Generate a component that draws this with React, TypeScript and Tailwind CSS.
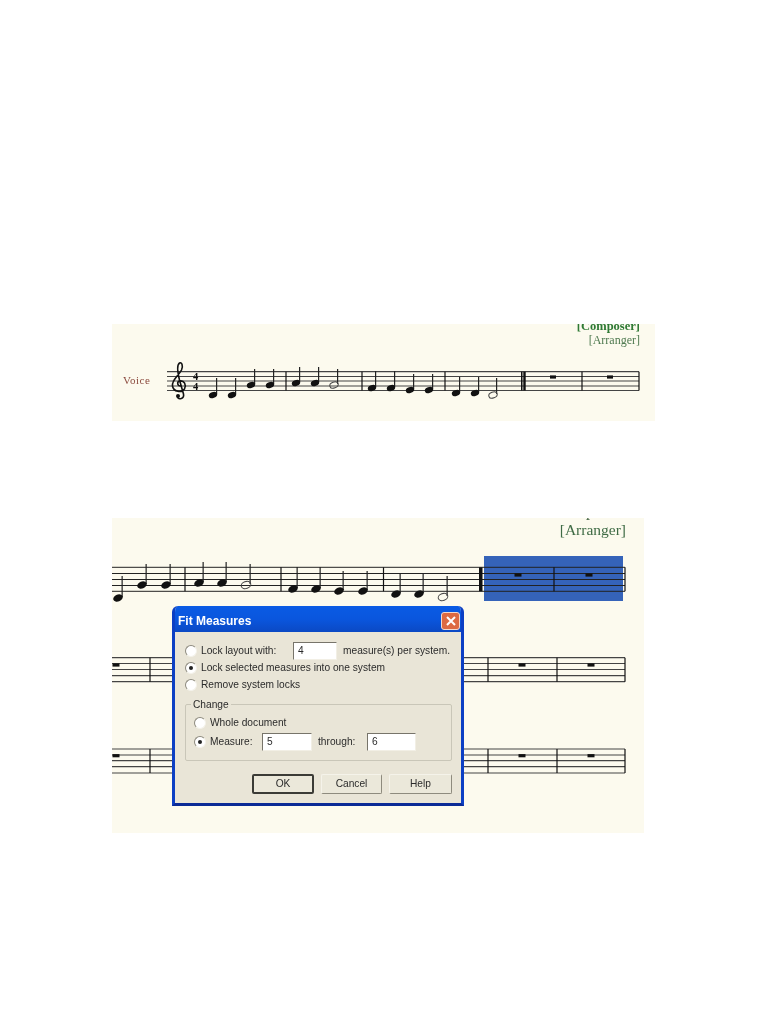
import React from "react";

type Note = [x: number, y: number, stemTop: number, hollow?: boolean];

const serif = "font-['Liberation_Serif',serif]";

const firstNotes: Note[] = [
  [213, 395, 378], [232, 395, 378], [251, 385, 369], [270, 385, 369],
  [296, 383, 367], [315, 383, 367], [334, 385, 369, true],
  [372, 388, 371], [391, 388, 371], [410, 390, 374], [429, 390, 374],
  [456, 393, 377], [475, 393, 377], [493, 395, 378, true],
];

const secondNotes: Note[] = [
  [118, 598, 576], [142, 585, 564], [166, 585, 564],
  [199, 583, 562], [222, 583, 562], [246, 585, 564, true],
  [293, 589, 567], [316, 589, 567], [339, 591, 571], [363, 591, 571],
  [396, 594, 573], [419, 594, 573], [443, 597, 576, true],
];

function Staff(props: {
  x1: number;
  x2: number;
  ys: number[];
  bars: number[];
  color: string;
  width?: number;
}) {
  const { x1, x2, ys, bars, color, width = 1 } = props;
  return (
    <g stroke={color} strokeWidth={width}>
      {ys.map((y) => (
        <line key={y} x1={x1} x2={x2} y1={y} y2={y} />
      ))}
      {bars.map((x) => (
        <line key={x} x1={x} x2={x} y1={ys[0]} y2={ys[4]} stroke="#111" strokeWidth={1.2} />
      ))}
    </g>
  );
}

function Notes({ notes, size = 1 }: { notes: Note[]; size?: number }) {
  return (
    <g>
      {notes.map(([x, y, top, hollow]) => (
        <g key={x}>
          <line x1={x + 3.6 * size} x2={x + 3.6 * size} y1={y - 1} y2={top} stroke="#222" strokeWidth={1.2} />
          <ellipse
            cx={x}
            cy={y}
            rx={4.3 * size}
            ry={3 * size}
            transform={`rotate(-20 ${x} ${y})`}
            fill={hollow ? "none" : "#111"}
            stroke={hollow ? "#444" : "none"}
            strokeWidth={1}
          />
        </g>
      ))}
    </g>
  );
}

function Rests({ xs, y, w = 7 }: { xs: number[]; y: number; w?: number }) {
  return (
    <g>
      {xs.map((x) => (
        <rect key={x} x={x - w / 2} y={y - 1.6} width={w} height={3.2} fill="#111" />
      ))}
    </g>
  );
}

function FirstScore() {
  return (
    <svg viewBox="112 324 543 97" className="block h-[97px] w-[543px]">
      <Staff
        x1={167}
        x2={639}
        ys={[371.7, 376.5, 381, 386, 390.5]}
        bars={[286, 362, 445, 582, 639]}
        color="#444"
        width={1.2}
      />
      <rect x={521} y={371.7} width={1.5} height={18.8} fill="#111" />
      <rect x={523.3} y={371.7} width={2.4} height={18.8} fill="#111" />
      {/* treble clef */}
      <path
        d="M180.5 386 C177.5 386 176.5 382 179.5 381 C184.5 380 186.5 385 184.5 389 C181.5 393 173.5 392 172.5 386 C171.5 380 178.5 376 181.5 370 C183.5 365 181.5 362 179.5 363 C176.5 365 177.5 372 179.5 380 L183.5 394 C184.5 399 178.5 400 177.5 397"
        fill="none"
        stroke="#111"
        strokeWidth={1.6}
      />
      <circle cx={178} cy={396} r={2} fill="#111" />
      <text x={195.5} y={380} fontSize={10.5} fontWeight={700} textAnchor="middle" fill="#111" className={serif}>
        4
      </text>
      <text x={195.5} y={390} fontSize={10.5} fontWeight={700} textAnchor="middle" fill="#111" className={serif}>
        4
      </text>
      <Notes notes={firstNotes} />
      <Rests xs={[553, 610]} y={377} w={6} />
    </svg>
  );
}

function SecondScore() {
  const staffTwo = [657.7, 663.5, 669.5, 675.7, 681.7];
  const staffThree = [749, 755, 760.7, 766.7, 773];
  return (
    <svg viewBox="112 518 532 315" className="block h-[315px] w-[532px]">
      <rect x={484} y={556} width={139} height={45} fill="#3563b9" />
      <Staff
        x1={112}
        x2={625}
        ys={[567.3, 573.5, 579.5, 585.5, 591.3]}
        bars={[185, 281, 383.5, 554, 625]}
        color="#222"
      />
      <rect x={479} y={567.3} width={3.5} height={24} fill="#111" />
      <Notes notes={secondNotes} size={1.15} />
      <Rests xs={[518, 589]} y={575} />
      <Staff x1={112} x2={625} ys={staffTwo} bars={[150, 488, 557, 625]} color="#444" width={1.2} />
      <Rests xs={[116, 522, 591]} y={665} />
      <Staff x1={112} x2={625} ys={staffThree} bars={[150, 488, 557, 625]} color="#444" width={1.2} />
      <Rests xs={[116, 522, 591]} y={755.7} />
    </svg>
  );
}

function Radio({ checked = false }: { checked?: boolean }) {
  return (
    <span className="flex h-[12px] w-[12px] shrink-0 items-center justify-center rounded-full border border-t-[#8d8a7e] border-l-[#8d8a7e] border-r-[#f4f2ea] border-b-[#f4f2ea] bg-white">
      {checked && <span className="h-[4px] w-[4px] rounded-full bg-[#222]" />}
    </span>
  );
}

function Field({ value, className }: { value: string; className: string }) {
  return (
    <div className={`flex h-[18px] items-center border border-t-[#77746a] border-l-[#77746a] border-r-[#f2efe5] border-b-[#f2efe5] bg-white pl-[4px] ${className}`}>
      {value}
    </div>
  );
}

function FitMeasures() {
  return (
    <div className="absolute left-[60px] top-[88px] flex h-[200px] w-[292px] flex-col overflow-hidden rounded-t-[6px] border-x-[3px] border-b-[3px] border-x-[#0c3fc4] border-b-[#0a2a96] bg-[#e9e5d7] font-['Liberation_Sans',sans-serif] text-[10.2px] text-[#2b2b2b]">
      <div className="-mx-[3px] flex h-[26px] shrink-0 items-center justify-between bg-gradient-to-b from-[#0a5be4] via-[#0a56de] to-[#0b49c4] pl-[6px] pr-[4px] pt-[3px]">
        <span className="text-[12px] font-bold text-white">Fit Measures</span>
        <span className="flex h-[18px] w-[19px] items-center justify-center rounded-[3px] border border-[#f3d9cc] bg-[#dd6a42]">
          <svg viewBox="0 0 12 12" className="h-[12px] w-[12px]">
            <path d="M2 2 L10 10 M10 2 L2 10" stroke="#fff" strokeWidth={2} />
          </svg>
        </span>
      </div>

      <div className="flex flex-col pl-[10px] pr-[9px] pt-[10px]">
        <div className="flex h-[17px] items-center">
          <Radio />
          <span className="ml-[4px] w-[92px]">Lock layout with:</span>
          <Field value="4" className="w-[44px]" />
          <span className="ml-[6px] whitespace-nowrap">measure(s) per system.</span>
        </div>
        <div className="flex h-[17px] items-center gap-[4px]">
          <Radio checked />
          <span>Lock selected measures into one system</span>
        </div>
        <div className="flex h-[17px] items-center gap-[4px]">
          <Radio />
          <span>Remove system locks</span>
        </div>

        <div className="relative mt-[11px] flex h-[57px] w-[267px] flex-col rounded-[2px] border border-[#c9c6b8] pl-[8px] pt-[9px]">
          <span className="absolute -top-[7px] left-[5px] bg-[#e9e5d7] px-[2px] leading-[13px]">Change</span>
          <div className="flex h-[17px] items-center gap-[4px]">
            <Radio />
            <span>Whole document</span>
          </div>
          <div className="mt-[2px] flex h-[18px] items-center">
            <Radio checked />
            <span className="ml-[4px] w-[52px]">Measure:</span>
            <Field value="5" className="w-[50px]" />
            <span className="ml-[6px] w-[49px]">through:</span>
            <Field value="6" className="w-[49px]" />
          </div>
        </div>

        <div className="mt-[13px] flex justify-end gap-[7px]">
          <button className="h-[20px] w-[62px] rounded-[2px] border-2 border-[#3b3b36] bg-[#ebe8da]">OK</button>
          <button className="h-[20px] w-[61px] rounded-[2px] border border-[#f5f3ea] border-b-[#8e8b7e] border-r-[#8e8b7e] bg-[#ebe8da]">Cancel</button>
          <button className="h-[20px] w-[63px] rounded-[2px] border border-[#f5f3ea] border-b-[#8e8b7e] border-r-[#8e8b7e] bg-[#ebe8da]">Help</button>
        </div>
      </div>
    </div>
  );
}

export default function App() {
  return (
    <div className="min-h-[1024px] bg-white pl-[112px] pt-[324px]">
      <div className="relative h-[97px] w-[543px] overflow-hidden bg-[#fcfaee] blur-[0.35px]">
        <FirstScore />
        <span className={`absolute -top-[5px] right-[15px] text-[12.5px] font-bold leading-[14px] text-[#2f7a35] ${serif}`}>
          [Composer]
        </span>
        <span className={`absolute right-[15px] top-[9px] text-[12px] leading-[14px] text-[#4f7a50] ${serif}`}>
          [Arranger]
        </span>
        <span className={`absolute left-[11px] top-[49px] text-[11px] leading-[14px] tracking-[0.5px] text-[#8b4a3e] ${serif}`}>
          Voice
        </span>
      </div>

      <div className="relative mt-[97px] h-[315px] w-[532px] overflow-hidden bg-[#fcfaee] blur-[0.35px]">
        <SecondScore />
        <span className={`absolute -top-[16px] right-[18px] text-[16px] leading-[18px] text-[#4a6a4a] ${serif}`}>
          [Composer]
        </span>
        <span className={`absolute right-[18px] top-[3px] text-[15.5px] leading-[18px] text-[#3f6b45] ${serif}`}>
          [Arranger]
        </span>
        <FitMeasures />
      </div>
    </div>
  );
}
